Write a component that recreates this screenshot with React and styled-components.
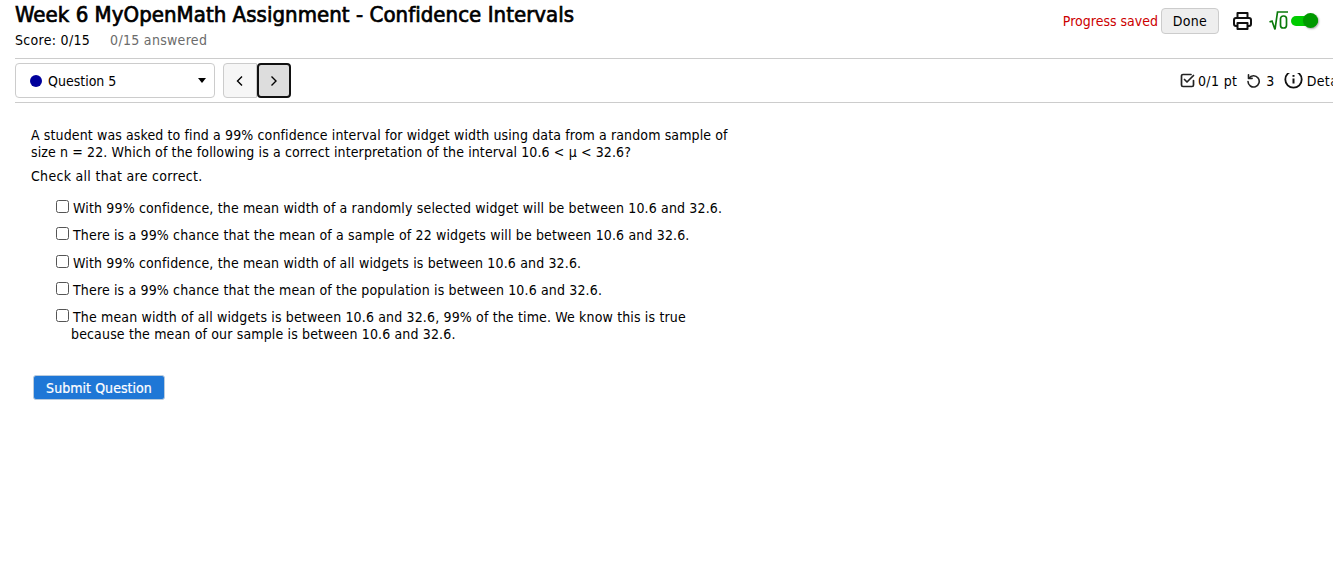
import React from "react";
import styled, { createGlobalStyle } from "styled-components";

const Global = createGlobalStyle`
  html, body { margin: 0; padding: 0; background: #fff; overflow: hidden; }
  body { font-family: "DejaVu Sans Condensed", "DejaVu Sans", sans-serif; color: #000; }
`;
const Page = styled.div`width: 1333px; height: 576px; overflow: hidden; padding-left: 15px; box-sizing: border-box;`;
const Header = styled.header`display: flex; justify-content: space-between; height: 58px; border-bottom: 1px solid #ccc;`;
const TitleBlock = styled.div`padding-top: 0;`;
const Title = styled.h1`margin: 0; font: 400 22px/29px "DejaVu Sans Condensed", "DejaVu Sans", sans-serif; -webkit-text-stroke: 0.7px #000; letter-spacing: 0.05px; white-space: nowrap;`;
const ScoreRow = styled.div`display: flex; gap: 20px; margin-top: 3px; font-size: 14px; line-height: 17px; letter-spacing: 0.3px;`;
const Muted = styled.span`color: #6b6b6b;`;
const Actions = styled.div`display: flex; align-items: center; height: 26px; margin-top: 8px; padding-right: 15px;`;
const Saved = styled.span`color: #c00; font-size: 14px; letter-spacing: 0; margin-right: 3px;`;
const Done = styled.button`width: 58px; height: 26px; padding: 0; background: #eee; border: 1px solid #ccc; border-radius: 4px; font: inherit; font-size: 14px; letter-spacing: 0.3px; color: #000;`;
const PrintWrap = styled.span`display: flex; margin-left: 14px; margin-right: 17px;`;
const Sqrt = styled.span`display: flex; color: #060;`;
const Toggle = styled.span`position: relative; display: block; width: 27px; height: 10px; margin-left: 3px; background: #0c0; border-radius: 5px;`;
const Knob = styled.span`position: absolute; right: 0; top: -3px; width: 15px; height: 15px; border-radius: 50%; background: #090; box-shadow: 1px 1px 2px rgba(0,0,0,.35);`;
const Bar = styled.div`display: flex; align-items: center; justify-content: space-between; height: 43px; border-bottom: 1px solid #ccc; box-sizing: content-box;`;
const BarLeft = styled.div`display: flex; align-items: center;`;
const Selector = styled.div`display: flex; align-items: center; width: 200px; height: 35px; box-sizing: border-box; padding: 0 8px 0 14px; border: 1px solid #ccc; border-radius: 4px; font-size: 14px;`;
const Dot = styled.span`width: 12px; height: 12px; border-radius: 50%; background: #00009c; margin-right: 6px;`;
const Caret = styled.span`margin-left: auto; width: 0; height: 0; border-left: 4px solid transparent; border-right: 4px solid transparent; border-top: 5px solid #000;`;
const NavGroup = styled.div`display: flex; margin-left: 8px;`;
const NavButton = styled.button`
  display: flex; align-items: center; justify-content: center; width: 34px; height: 35px; padding: 0; color: #000;
  background: ${p => p.$active ? "#ddd" : "#f6f6f6"};
  border: ${p => p.$active ? "2px solid #111" : "1px solid #ccc"};
  border-radius: ${p => p.$active ? "4px" : "4px 0 0 4px"};
`;
const Meta = styled.div`display: flex; align-items: center; font-size: 14px; letter-spacing: 0.35px; white-space: nowrap; width: 153px; flex: none; overflow: hidden;`;
const MetaItem = styled.span`display: flex; align-items: center; gap: ${p => p.$inner}px; margin-right: ${p => p.$gap}px;`;
const InfoIcon = styled.svg`flex: none; margin-top: -3px;`;
const Question = styled.main`width: 720px; padding: 24px 0 0 16px; font-size: 14px; line-height: 17px; letter-spacing: 0.12px;`;
const Para = styled.p`margin: 0 0 7px;`;
const CheckNote = styled(Para)`letter-spacing: 0.3px;`;
const Options = styled.div`margin-top: 15px; margin-left: 25px; letter-spacing: 0.15px;`;
const Option = styled.label`display: block; margin-bottom: 10.3px; padding-left: 15px; text-indent: -15px; width: 680px;`;
const Box = styled.span`display: inline-block; width: 13px; height: 13px; box-sizing: border-box; border: 1px solid #555; border-radius: 2.5px; background: #fff; margin-right: 4px; vertical-align: 0; text-indent: 0;`;
const Submit = styled.button`display: block; margin: 32px 0 0 2px; width: 132px; height: 25px; padding: 1px 0 0; background: #1f77d6; color: #fff; border: 1px solid #bcd; border-radius: 3px; font: inherit; font-size: 14px; letter-spacing: 0.05px; -webkit-text-stroke: 0.2px #fff;`;

const options = [
  "With 99% confidence, the mean width of a randomly selected widget will be between 10.6 and 32.6.",
  "There is a 99% chance that the mean of a sample of 22 widgets will be between 10.6 and 32.6.",
  "With 99% confidence, the mean width of all widgets is between 10.6 and 32.6.",
  "There is a 99% chance that the mean of the population is between 10.6 and 32.6.",
  <>The mean width of all widgets is between 10.6 and 32.6, 99% of the time. We know this is true<br />because the mean of our sample is between 10.6 and 32.6.</>,
];

const Chevron = ({ left }) => (
  <svg width="10" height="12" viewBox="0 0 10 12" fill="none" stroke="currentColor" strokeWidth="1.4">
    <path d={left ? "M7 1.5 2.5 6 7 10.5" : "M2.5 1.5 7 6 2.5 10.5"} />
  </svg>
);

export default function App() {
  return (
    <Page>
      <Global />
      <Header>
        <TitleBlock>
          <Title>Week 6 MyOpenMath Assignment - Confidence Intervals</Title>
          <ScoreRow><span>Score: 0/15</span><Muted>0/15 answered</Muted></ScoreRow>
        </TitleBlock>
        <Actions>
          <Saved>Progress saved</Saved>
          <Done>Done</Done>
          <PrintWrap>
            <svg width="19" height="20" viewBox="0 0 19 20" fill="none" stroke="#111" strokeWidth="2" strokeLinejoin="round">
              <path d="M4.5 7V2h10v5" /><rect x="1" y="7" width="17" height="8" rx="2" /><rect x="4.5" y="12" width="10" height="6" fill="#fff" />
            </svg>
          </PrintWrap>
          <Sqrt>
            <svg width="19" height="20" viewBox="0 0 19 20" fill="none" stroke="#0a7a0a" strokeWidth="1.7">
              <path d="M0.5 11 3 10l3 8.5L8.5 1h10.5" /><rect x="11.5" y="5" width="6" height="12" rx="2.8" />
            </svg>
          </Sqrt>
          <Toggle><Knob /></Toggle>
        </Actions>
      </Header>
      <Bar>
        <BarLeft>
          <Selector><Dot /><span>Question 5</span><Caret /></Selector>
          <NavGroup>
            <NavButton><Chevron left /></NavButton>
            <NavButton $active><Chevron /></NavButton>
          </NavGroup>
        </BarLeft>
        <Meta>
          <MetaItem $inner={3} $gap={9}>
            <svg width="15" height="15" viewBox="0 0 15 15" fill="none" stroke="#222" strokeWidth="1.7" strokeLinecap="round" strokeLinejoin="round">
              <path d="M13.5 7.5v4.5a1.5 1.5 0 0 1-1.5 1.5H3A1.5 1.5 0 0 1 1.5 12V3A1.5 1.5 0 0 1 3 1.5h8" /><path d="M4.5 6.5 7 9l6.5-6.5" />
            </svg>
            0/1 pt
          </MetaItem>
          <MetaItem $inner={5} $gap={9}>
            <svg width="15" height="15" viewBox="0 0 15 15" fill="none" stroke="#222" strokeWidth="1.6" strokeLinecap="round" strokeLinejoin="round">
              <path d="M3 5.2A5.6 5.6 0 1 1 2 8.5" /><path d="M2.5 1.8v3.6h3.6" />
            </svg>
            3
          </MetaItem>
          <MetaItem $inner={4} $gap={0}>
            <InfoIcon width="19" height="19" viewBox="0 0 19 19" fill="none" stroke="#111" strokeWidth="1.8">
              <circle cx="9.5" cy="9.5" r="8.2" /><path d="M9.5 8.5v5" strokeWidth="2" /><path d="M9.5 5v1.8" strokeWidth="2" />
            </InfoIcon>
            Details
          </MetaItem>
        </Meta>
      </Bar>
      <Question>
        <Para>A student was asked to find a 99% confidence interval for widget width using data from a random sample of<br />size n = 22. Which of the following is a correct interpretation of the interval 10.6 &lt; μ &lt; 32.6?</Para>
        <CheckNote>Check all that are correct.</CheckNote>
        <Options>
          {options.map((o, i) => <Option key={i}><Box />{o}</Option>)}
        </Options>
        <Submit>Submit Question</Submit>
      </Question>
    </Page>
  );
}
